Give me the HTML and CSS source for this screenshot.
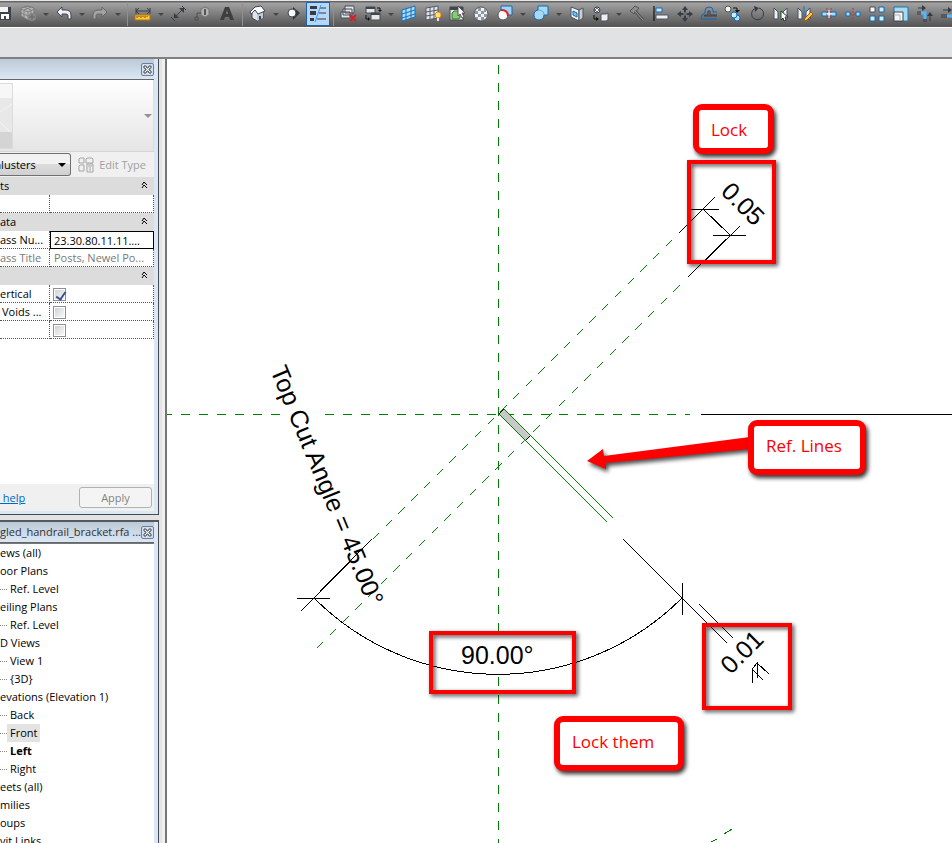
FILE: index.html
```html
<!DOCTYPE html>
<html lang="en">
  <head>
    <meta charset="UTF-8" />
    <meta name="viewport" content="width=device-width, initial-scale=1" />
    <title>angled_handrail_bracket.rfa</title>
    <link rel="stylesheet" href="styles.css">
  </head>
  <body>
    <div class="toolbar" role="toolbar" aria-label="Quick access">
      <button class="tool" aria-label="Save"><svg viewBox="0 0 16 16"><path d="M0 1h15v13H0z" fill="#3c4250"/><path d="M3 1h9v5H3z" fill="#f4f4f4"/><path d="M5 8h8v5H5z" fill="#fff"/><path d="M8 10h2v3H8z" fill="#3c4250"/><path d="M1 2h1v11H1z" fill="#8f97a5"/></svg></button>
      <button class="tool" aria-label="Synchronize"><svg viewBox="0 0 16 16"><path d="M8 0l6 2v8l-6 4-7-4V2z" fill="#b4b4b4" stroke="#777"/><path d="M1 3l7 3 6-3M8 6v8M4 1l7 3v8M11 1L4 4v8M1 7l7 3 6-3" fill="none" stroke="#808080"/><circle cx="12" cy="11" r="4" fill="#888"/><path d="M9 11h6M12 8v6" stroke="#666"/></svg></button>
      <button class="caret" aria-label="Synchronize options"></button>
      <button class="tool" aria-label="Undo"><svg viewBox="0 0 16 16"><path d="M1 6l5-5v3h4c3 0 5 2 5 5v4h-3v-3c0-2-1-2-3-2H6v3z" fill="#eef0f3" stroke="#3e4450"/></svg></button>
      <button class="caret" aria-label="Undo list"></button>
      <button class="tool" aria-label="Redo"><svg viewBox="0 0 16 16"><path d="M15 6l-5-5v3H6C3 4 1 6 1 9v4h3v-3c0-2 1-2 3-2h3v3z" fill="#a4a4a4" stroke="#666"/></svg></button>
      <button class="caret" aria-label="Redo list"></button>
      <span class="sep"></span>
      <button class="tool" aria-label="Measure"><svg viewBox="0 0 16 16"><path d="M1 5h14M4 2L1 5l3 3M12 2l3 3-3 3M1 2v6M15 2v6" fill="none" stroke="#363c48"/><path d="M0 9h15v5H0z" fill="#ffc740" stroke="#b37500"/><path d="M2 10v2M4 10v1M6 10v2M8 10v1M10 10v2M12 10v1" stroke="#7c5200"/></svg></button>
      <button class="caret" aria-label="Measure options"></button>
      <button class="tool" aria-label="Aligned dimension"><svg viewBox="0 0 16 16"><path d="M4 11L12 3M11 0l4 4M0 11l4 4" fill="none" stroke="#363c48"/><path d="M8 2h5v5zM3 7v5h5z" fill="#363c48"/></svg></button>
      <button class="tool" aria-label="Tag by category"><svg viewBox="0 0 16 16"><path d="M10 1l4 2v6l-4 2-4-2V3z" fill="#b5b5b5" stroke="#737373"/><path d="M9 4h1v5" fill="none" stroke="#555" stroke-width="2"/><path d="M6 7H2v5" fill="none" stroke="#505050"/><path d="M0 11h3v3H0z" fill="none" stroke="#505050"/></svg></button>
      <button class="tool" aria-label="Text"><svg viewBox="0 0 16 16"><path d="M6 1h4l5 13h-4l-1-3H6l-1 3H1zM8 4L7 8h2z" fill="#3e3e3e" fill-rule="evenodd"/></svg></button>
      <span class="sep"></span>
      <button class="tool" aria-label="Default 3D view"><svg viewBox="0 0 16 16"><path d="M2 6v6l5 3 6-3V6L9 2z" fill="#dfe3ea" stroke="#3e4450"/><path d="M7 8v7l6-3V6z" fill="#c1cad8"/><path d="M0 6l5-5 6-1 4 5-7 3-3-4-4 4z" fill="#fff" stroke="#3e4450"/><path d="M9 10h2v3l-2 1z" fill="#3e4450"/></svg></button>
      <button class="caret" aria-label="3D view options"></button>
      <button class="tool" aria-label="Section"><svg viewBox="0 0 16 16"><path d="M7 1l7 6-7 7z" fill="#30353f"/><circle cx="6" cy="7" r="4" fill="#f8f8f8" stroke="#404652"/></svg></button>
      <button class="tool active" aria-label="Thin lines" aria-pressed="true"><svg viewBox="0 0 16 16"><path d="M0 0h7v3H0zM0 5h6v4H0zM0 12h4v3H0z" fill="#363b45"/><path d="M10 2h6M9 7h7M7 13h9" stroke="#363b45"/><path d="M11 -1L5 16" stroke="#3b99f2"/></svg></button>
      <span class="sep"></span>
      <button class="tool" aria-label="Close hidden windows"><svg viewBox="0 0 16 16"><path d="M4 0h9v7H4zM2 3h9v6H2zM0 6h9v6H0z" fill="#e2e5e9" stroke="#444a55"/><path d="M9 9l6 6M15 9l-6 6" stroke="#d81f26" stroke-width="2"/></svg></button>
      <button class="tool" aria-label="Switch windows"><svg viewBox="0 0 16 16"><path d="M1 1h9v6H1zM6 7h9v7H6z" fill="#e5e7ea" stroke="#444a55"/><path d="M1 1h9v2H1zM6 7h9v2H6z" fill="#40454f"/><path d="M12 2h3v3M1 9v4h3" fill="none" stroke="#111"/><path d="M13 4h4l-2 2zM3 11v4l2-2z" fill="#111"/></svg></button>
      <button class="caret" aria-label="Switch windows list"></button>
      <button class="tool" aria-label="Curtain system"><svg viewBox="0 0 16 16"><path d="M1 4l13-4v11L1 15z" fill="#a9dcfa" stroke="#1672bd"/><path d="M5 3v11M10 1v11M1 8l13-4M1 12l13-4" fill="none" stroke="#1672bd"/></svg></button>
      <button class="tool" aria-label="Show grid"><svg viewBox="0 0 16 16"><path d="M1 2l12-2v12L1 14z" fill="#e0e4ea" stroke="#555b67"/><path d="M5 1v12M9 1v12M1 6l12-2M1 10l12-2" fill="none" stroke="#555b67"/><circle cx="13" cy="9" r="3" fill="#ffdf79" stroke="#ef8b0b"/><path d="M12 12h2v3h-2z" fill="#e9e9e9"/></svg></button>
      <button class="tool" aria-label="Select elements"><svg viewBox="0 0 16 16"><path d="M1 1h13v13H1z" fill="#e9eeea" stroke="#41464e"/><path d="M1 1h13v3H1z" fill="#41464e"/><path d="M3 7l2-2h6v7l-2 1H3z" fill="#91c681" stroke="#2c7720"/><path d="M9 0v10l2-2 2 4 2-1-2-4h3z" fill="#fff" stroke="#555"/></svg></button>
      <button class="tool" aria-label="Material"><svg viewBox="0 0 16 16"><circle cx="8" cy="8" r="7" fill="#f1f1f1" stroke="#4c525c"/><path d="M5 2h3v3H5zM11 3h2v3h-2zM2 5h3v3H2zM8 5h3v3H8zM5 8h3v3H5zM11 8h3v3h-3zM3 11h2v2H3zM8 11h3v3H8z" fill="#8f99a6"/></svg></button>
      <button class="tool" aria-label="Cut geometry"><svg viewBox="0 0 16 16"><path d="M4 0h11v9H4z" fill="#9fd6f5" stroke="#1569b0"/><circle cx="6" cy="9" r="5" fill="#fafafa" stroke="#555b66"/><path d="M4 4c4 0 7 2 7 6" fill="none" stroke="#d9242a" stroke-width="2"/></svg></button>
      <button class="caret" aria-label="Cut options"></button>
      <button class="tool" aria-label="Join geometry"><svg viewBox="0 0 16 16"><path d="M5 0h10v9h-4a5 5 0 1 1-6-5z" fill="#a5d9f6" stroke="#1569b0"/><path d="M5 4c4 0 6 2 6 5" fill="none" stroke="#5ba5d6"/></svg></button>
      <button class="caret" aria-label="Join options"></button>
      <button class="tool" aria-label="Split face"><svg viewBox="0 0 16 16"><path d="M2 1l8 3v11l-8-4z" fill="#eef2f5" stroke="#4b515c"/><path d="M10 4l4-2v10l-4 3z" fill="#c9ced6" stroke="#4b515c"/><path d="M4 5l4 2v4L4 9z" fill="#7ec1ef" stroke="#1267b3"/></svg></button>
      <button class="tool" aria-label="Paint"><svg viewBox="0 0 16 16"><circle cx="4" cy="4" r="3" fill="#fff" stroke="#3b414c"/><path d="M3 1h2v2H3zM1 3h2v2H1zM5 3h2v2H5zM3 5h2v2H3z" fill="#5c6470"/><path d="M8 8h5l2-1v7l-2 1H8z" fill="#eceff3" stroke="#4c525d"/><path d="M1 9v4h3" fill="none" stroke="#111"/><path d="M3 11v4l3-2z" fill="#111"/></svg></button>
      <button class="caret" aria-label="Paint options"></button>
      <button class="tool" aria-label="Demolish"><svg viewBox="0 0 16 16"><path d="M1 5l5-5 4 2-5 6z" fill="#8d8d8d" stroke="#555"/><path d="M6 5l8 9" stroke="#555" stroke-width="3"/><path d="M6 5l8 9" stroke="#999"/></svg></button>
      <button class="tool" aria-label="Align"><svg viewBox="0 0 16 16"><path d="M1 0v15" stroke="#000"/><path d="M3 2h6v4H3z" fill="#c4e7fb" stroke="#176fb9"/><path d="M3 9h12v4H3z" fill="#edf0f4" stroke="#535966"/></svg></button>
      <button class="tool" aria-label="Move"><svg viewBox="0 0 16 16"><path d="M8 0l3 4H5zM8 16l3-4H5zM0 8l4-3v6zM16 8l-4-3v6z" fill="#363c47"/><path d="M8 3v3M8 10v3M3 8h3M10 8h3" stroke="#363c47" stroke-width="2"/><path d="M7 7h2v2H7z" fill="#fff" stroke="#444"/></svg></button>
      <button class="tool" aria-label="Offset"><svg viewBox="0 0 16 16"><path d="M16 6h-4V4q0-3-4-3T4 5v2Q0 8 0 13h16" fill="none" stroke="#1466b4"/><path d="M16 9H9V5H7v4H5q-2 0-2 1h13" fill="none" stroke="#343b47"/></svg></button>
      <button class="tool" aria-label="Copy"><svg viewBox="0 0 16 16"><circle cx="3" cy="3" r="3" fill="#f6f6f6" stroke="#555"/><path d="M8 2h4v3" fill="none" stroke="#111"/><path d="M10 4h5l-3 3z" fill="#111"/><circle cx="12" cy="12" r="3" fill="#aee0fa" stroke="#1569b3"/><circle cx="9" cy="9" r="3" fill="#c6ebfd" stroke="#1569b3"/></svg></button>
      <button class="tool" aria-label="Rotate"><svg viewBox="0 0 16 16"><path d="M5 3a6 6 0 1 0 5-1" fill="none" stroke="#353b46"/><path d="M5 0l5 2-4 4z" fill="#353b46"/></svg></button>
      <button class="tool" aria-label="Mirror pick axis"><svg viewBox="0 0 16 16"><path d="M1 2l4 4v7H1zM14 2l-4 4v7h4z" fill="#eef1f5" stroke="#4a505c"/><path d="M7 1v13" stroke="#55bb55"/><path d="M8 5v9l2-2 1 3 2-1-1-3h3z" fill="#fff" stroke="#333"/></svg></button>
      <button class="tool" aria-label="Mirror draw axis"><svg viewBox="0 0 16 16"><path d="M1 2l4 4v7H1zM13 2l-4 4v7h4z" fill="#eef1f5" stroke="#4a505c"/><path d="M7 0v15" stroke="#1c74c4"/><path d="M14 6l2 2-6 6-3 1 1-3z" fill="#ffc744" stroke="#a15c12"/></svg></button>
      <button class="tool" aria-label="Split element"><svg viewBox="0 0 16 16"><path d="M1 6h14v4H1z" fill="#a9def9" stroke="#1368b1"/><path d="M6 2v12M10 2v12" stroke="#b33838" stroke-dasharray="2 1"/><path d="M8 4v8M6 8h5" stroke="#fff"/></svg></button>
      <button class="tool" aria-label="Split with gap"><svg viewBox="0 0 16 16"><path d="M1 6h4v4H1zM11 6h4v4h-4z" fill="#a9def9" stroke="#1368b1"/><path d="M8 2v12" stroke="#b33838" stroke-dasharray="2 1"/><path d="M6 7v2M10 7v2" stroke="#b33838"/></svg></button>
      <button class="tool" aria-label="Array"><svg viewBox="0 0 16 16"><path d="M1 1h5v5H1z" fill="#fff" stroke="#444b57"/><path d="M10 1h5v5h-5zM1 10h5v5H1zM10 10h5v5h-5z" fill="#cfeeff" stroke="#1368b1"/></svg></button>
      <button class="tool" aria-label="Scale"><svg viewBox="0 0 16 16"><path d="M1 1h14v14H1z" fill="#a4dbee" stroke="#2475a8"/><path d="M1 6h9v9H1z" fill="#f4f6f8" stroke="#40454f"/><path d="M1 9h6v6" fill="none" stroke="#adb2ba"/></svg></button>
      <button class="tool" aria-label="Trim to corner"><svg viewBox="0 0 16 16"><path d="M1 2h6M13 15V9" stroke="#343a45"/><path d="M5 -1l4 3-4 3zM10 10l3-4 3 4z" fill="#343a45"/><path d="M0 6h4M0 8h4M7 12v4M9 12v4" stroke="#343a45"/><path d="M4 7h4v6" fill="none" stroke="#52b8ff" stroke-width="3"/></svg></button>
      <button class="tool" aria-label="Trim single"><svg viewBox="0 0 16 16"><path d="M2 4h6" stroke="#343a45"/><path d="M7 1l4 3-4 3z" fill="#343a45"/><path d="M0 9h6M0 11h6" stroke="#343a45"/><path d="M6 10h10" stroke="#52b8ff" stroke-width="3"/></svg></button>
    </div>
    <div class="options-bar"></div>

    <div class="workspace">
      <aside class="sidebar">
        <section class="panel properties">
          <header class="panel-title">
            <span class="title-text"></span>
            <button class="close" aria-label="Close properties"><svg viewBox="0 0 9 9"><path d="M1 1h2l1 2h1l1-2h2v2L6 4v1l2 1v2H6L5 6H4L3 8H1V6l2-1V4L1 3z" fill="#fff" stroke="#3f4757"/></svg></button>
          </header>
          <div class="type-preview">
            <div class="thumb"><svg viewBox="0 0 12 64"><path d="M0 14h12v50H0z" fill="#e8e8e8"/><path d="M0 28l12-8M0 38l12 12" stroke="#f4f4f4"/><path d="M0 48h12v16H0z" fill="#d4d4d4"/></svg></div>
            <span class="preview-caret"></span>
          </div>
          <div class="type-row">
            <div class="select-wrap">
              <select class="type-select" aria-label="Category"><option>alusters</option></select>
            </div>
            <button class="edit-type" disabled>
              <svg viewBox="0 0 16 16"><path d="M1 2l1-1h4v5H1zM8 2l1-1h5l1 1v4H8zM1 9l1-1h4v6H1z" fill="none" stroke="#a5a5a5"/><path d="M9 7h6v8H9z" fill="#f0f0f0" stroke="#a5a5a5"/><path d="M10 9h4M11 11h2M11 13h2" stroke="#a5a5a5"/></svg>
              Edit Type
            </button>
          </div>
          <table class="props">
            <colgroup>
              <col class="name-col" />
              <col />
            </colgroup>
            <tr class="group"><th colspan="2"><span>ts</span><svg viewBox="0 0 7 8"><path d="M1 4l2-3 3 3M1 7l2-3 3 3" fill="none" stroke="#000"/></svg></th></tr>
            <tr><td></td><td></td></tr>
            <tr class="group"><th colspan="2"><span>ata</span><svg viewBox="0 0 7 8"><path d="M1 4l2-3 3 3M1 7l2-3 3 3" fill="none" stroke="#000"/></svg></th></tr>
            <tr><td><label for="omniNumber">ass Nu...</label></td><td class="editing"><input type="text" id="omniNumber" value="23.30.80.11.11...." /></td></tr>
            <tr class="readonly"><td>ass Title</td><td class="value">Posts, Newel Po...</td></tr>
            <tr class="group"><th colspan="2"><svg viewBox="0 0 7 8"><path d="M1 4l2-3 3 3M1 7l2-3 3 3" fill="none" stroke="#000"/></svg></th></tr>
            <tr><td><label for="vertical">ertical</label></td><td><input type="checkbox" id="vertical" checked /></td></tr>
            <tr><td class="inset"><label for="voids">Voids ...</label></td><td><input type="checkbox" id="voids" /></td></tr>
            <tr><td></td><td><input type="checkbox" aria-label="Shared" /></td></tr>
          </table>
          <footer class="panel-footer">
            <a href="#help">&nbsp;help</a>
            <button class="apply" disabled>Apply</button>
          </footer>
        </section>

        <section class="panel browser">
          <header class="panel-title">
            <span class="title-text">gled_handrail_bracket.rfa ...</span>
            <button class="close" aria-label="Close browser"><svg viewBox="0 0 9 9"><path d="M1 1h2l1 2h1l1-2h2v2L6 4v1l2 1v2H6L5 6H4L3 8H1V6l2-1V4L1 3z" fill="#fff" stroke="#3f4757"/></svg></button>
          </header>
          <ul class="tree">
            <li>ews (all)</li>
            <li>oor Plans</li>
            <li class="leaf"><span>Ref. Level</span></li>
            <li>eiling Plans</li>
            <li class="leaf"><span>Ref. Level</span></li>
            <li>D Views</li>
            <li class="leaf"><span>View 1</span></li>
            <li class="leaf"><span>{3D}</span></li>
            <li>evations (Elevation 1)</li>
            <li class="leaf"><span>Back</span></li>
            <li class="leaf selected"><span>Front</span></li>
            <li class="leaf open"><span>Left</span></li>
            <li class="leaf"><span>Right</span></li>
            <li>eets (all)</li>
            <li>milies</li>
            <li>oups</li>
            <li>vit Links</li>
          </ul>
        </section>
      </aside>

      <main class="canvas">
        <svg class="drawing">
          <g transform="translate(-167 -59)">
            <!-- reference planes -->
            <g class="plane">
              <path d="M498.500 65V634M498.500 677V2000"/>
              <path d="M163 414.500H280M325 414.500H690"/>
              <path d="M373 539L674 238"/>
              <path d="M317 648L682 283"/>
              <path d="M711 842l6-3M724 834l8-5" stroke-dasharray="none"/>
            </g>
            <path class="ink" d="M701 414.500H3000"/>

            <!-- bracket profile and reference lines -->
            <path d="M499 414l5-5 26 27-5 5z" fill="#c8c8c8"/>
            <path class="ink" d="M499 414l5-5M525 441l5-5"/>
            <path class="ref-line" d="M504 409L613 518M499 414L607 522"/>

            <!-- top dimension -->
            <path class="ink" d="M679 233L715 197M688 277L740 226M691 209.500H719M713 235.500H746M703 209L730 235"/>

            <!-- angle dimension -->
            <path class="ink" d="M372 539L301 611M297 598.500H330M682.500 583V615M623 539L727 643M699 604L733 638"/>
            <path class="ink" d="M314 598A260 260 0 0 0 682 598"/>
            <path class="ink" d="M752.500 683V669L757 663V678M757 663L769 674M752 669L763 680"/>

            <text class="dim" transform="translate(737 210) rotate(45)" text-anchor="middle">0.05</text>
            <text class="dim" transform="translate(748 658) rotate(-45)" text-anchor="middle">0.01</text>
            <text class="dim" x="461" y="664">90.00°</text>
            <text class="dim" transform="translate(270 370) rotate(67.5)">Top Cut Angle = 45.00°</text>

            <path class="arrow" d="M587 461L603 449L604 456L750 437V449L606 463V469z"/>
          </g>
        </svg>
        <div class="mark mark-offset"></div>
        <div class="mark mark-angle"></div>
        <div class="mark mark-gap"></div>
        <div class="note note-lock">Lock</div>
        <div class="note note-ref">Ref. Lines</div>
        <div class="note note-them">Lock them</div>
      </main>
    </div>
  </body>
</html>
```
FILE: styles.css
```css
* {
  box-sizing: border-box;
}
body {
  display: flex;
  flex-direction: column;
  height: 100vh;
  margin: 0;
  overflow: hidden;
  background-color: #e3e3e3;
  color: #000;
  font-family: "Open Sans", "Noto Sans", sans-serif;
  font-size: 11px;
  line-height: 18px;
}
button,
input,
select {
  margin: 0;
  font: inherit;
  color: inherit;
}

/* Toolbar */
.toolbar {
  display: flex;
  flex: none;
  height: 27px;
  padding-top: 1px;
  margin-left: -8px;
  border-top: 1px solid #e6e6e6;
  border-bottom: 1px solid #5a5a5a;
  background: linear-gradient(#666 0, #666 1px, #a2a2a2 2px, #555 100%);
}
.tool,
.caret {
  flex: none;
  display: flex;
  align-items: center;
  justify-content: center;
  padding: 0;
  border: 0;
  background: none;
}
.tool {
  width: 24px;
}
.tool svg {
  flex: none;
  width: 16px;
  height: 16px;
  overflow: visible;
}
.tool.active {
  border: 1px solid #1b62b5;
  background-color: #b5d6f6;
}
.caret {
  width: 12px;
  padding-right: 1px;
}
.caret::before {
  content: "";
  border: 3px solid transparent;
  border-top: 3px solid #444;
  border-bottom: 0;
}
.sep {
  flex: none;
  width: 7px;
  border-left: 3px solid transparent;
  border-right: 3px solid transparent;
  background: #909090 content-box;
}
.options-bar {
  flex: none;
  height: 32px;
  border-top: 1px solid #fff;
  border-bottom: 2px solid #808080;
  background-color: #e1e2e4;
}

/* Side panels */
.workspace {
  display: flex;
  flex: 1;
  min-height: 0;
}
.sidebar {
  display: flex;
  flex: none;
  flex-direction: column;
  gap: 5px;
  width: 159px;
}
.panel {
  display: flex;
  flex-direction: column;
  padding-right: 4px;
  border-right: 1px solid #474b52;
  background-color: #dbe7f5;
}
.properties {
  flex: none;
  height: 456px;
  padding-bottom: 3px;
  border-bottom: 1px solid #474b52;
  background: linear-gradient(#fff, #fff) no-repeat 0 0 / 154px 425px #dbe7f5;
}
.browser {
  flex: 1;
  min-height: 0;
  border-top: 2px solid #55585e;
}
.panel-title {
  display: flex;
  flex: none;
  align-items: center;
  height: 21px;
  border-bottom: 1px solid #666;
  background: linear-gradient(#bccad8, #dbe7f4);
  color: #333;
  white-space: nowrap;
}
.title-text {
  flex: 1;
}
.close {
  display: flex;
  flex: none;
  align-items: center;
  justify-content: center;
  width: 13px;
  height: 13px;
  padding: 0;
  border: 1px solid #6d7f9a;
  border-radius: 2px;
  background-color: #d3dfec;
}
.close svg {
  flex: none;
  width: 9px;
  height: 9px;
}
.type-preview {
  display: flex;
  flex: none;
  align-items: center;
  justify-content: space-between;
  height: 72px;
  padding-right: 1px;
  border-right: 1px solid #dcdcdc;
  border-bottom: 1px solid #d5d5d5;
  background: linear-gradient(#fff, #e5e5e5);
}
.thumb {
  width: 13px;
  height: 66px;
  border: 1px solid #dcdcdc;
  border-left: 0;
  background-color: #f7f7f7;
}
.thumb svg {
  display: block;
  width: 12px;
  height: 64px;
}
.preview-caret {
  border: 4px solid transparent;
  border-top-color: #929292;
  border-bottom: 0;
}
.type-row {
  display: flex;
  flex: none;
  align-items: center;
  justify-content: space-between;
  height: 25px;
  padding-right: 8px;
  background-color: #f0f0f0;
}
.select-wrap {
  position: relative;
  width: 71px;
}
.select-wrap::after {
  content: "";
  position: absolute;
  top: 10px;
  right: 5px;
  border: 4px solid transparent;
  border-top-color: #000;
  border-bottom: 0;
  pointer-events: none;
}
.type-select {
  display: block;
  width: 100%;
  height: 23px;
  padding: 0;
  appearance: none;
  border: 1px solid #707070;
  border-left: 0;
  border-radius: 0 3px 3px 0;
  background: linear-gradient(#f2f2f2 50%, #dcdcdc 50%, #d0d0d0);
  text-indent: -5px;
}
.edit-type {
  display: flex;
  align-items: center;
  gap: 5px;
  padding: 0;
  border: 0;
  background: none;
  color: #a0a0a0;
  white-space: nowrap;
}
.edit-type svg {
  width: 16px;
  height: 16px;
}
.props {
  width: 154px;
  table-layout: fixed;
  border-collapse: separate;
  border-spacing: 0;
  background-color: #fff;
}
.name-col {
  width: 50px;
}
.props th,
.props td {
  height: 18px;
  padding: 0;
  font-weight: normal;
  line-height: 17px;
  text-align: left;
  vertical-align: top;
  white-space: nowrap;
}
.props td {
  border-right: 1px dotted #555;
  border-bottom: 1px dotted #555;
}
.props .inset {
  padding-left: 2px;
}
.props .value {
  padding-left: 4px;
}
.props .readonly {
  color: #787878;
}
.group th {
  background-color: #dcdcdc;
}
.group svg {
  float: right;
  width: 7px;
  height: 8px;
  margin: 4px 6px 0 0;
}
.props .editing {
  border: 0;
}
.editing input {
  display: block;
  width: 100%;
  height: 18px;
  padding: 0 3px;
  border: 1px solid #000;
  outline: 0;
  background-color: #fff;
}
.props input[type="checkbox"] {
  display: block;
  width: 13px;
  height: 13px;
  padding: 1px;
  margin: 3px 0 0 3px;
  margin-bottom: 1px;
  appearance: none;
  border: 1px solid #8e8f8f;
  background: linear-gradient(135deg, #cfd2d6, #f8f8f8) content-box;
}
.props input[type="checkbox"]:checked::before {
  content: "";
  display: block;
  width: 4px;
  height: 8px;
  margin-left: 3px;
  border: solid #39538f;
  border-width: 0 2px 2px 0;
  transform: rotate(35deg);
}
.panel-footer {
  display: flex;
  align-items: center;
  justify-content: space-between;
  height: 27px;
  padding-right: 2px;
  margin-top: auto;
  background-color: #f0f0f0;
}
.panel-footer a {
  color: #0066cc;
}
.apply {
  width: 73px;
  height: 21px;
  padding: 0;
  border: 1px solid #adb2b5;
  border-radius: 3px;
  background-color: #f4f4f4;
  color: #838383;
}

/* Project browser */
.tree {
  flex: 1;
  min-height: 0;
  padding: 0;
  margin: 0;
  overflow: hidden;
  border-top: 1px solid #777;
  background-color: #fff;
  list-style: none;
  white-space: nowrap;
}
.tree .leaf {
  display: flex;
  align-items: center;
}
.leaf::before {
  content: "";
  width: 7px;
  border-top: 1px dotted #888;
}
.leaf span {
  padding: 0 3px;
}
.selected span {
  background-color: #e3e3e3;
}
.open {
  font-weight: bold;
}

/* Drawing area */
.canvas {
  position: relative;
  flex: 1;
  margin-left: 3px;
  overflow: hidden;
  border: solid #f0f0f0;
  border-width: 0 0 0 3px;
  background-color: #fff;
}
.drawing {
  display: block;
  width: 100%;
  height: 100%;
  border-left: 2px solid #757575;
}
.plane,
.ink,
.ref-line {
  shape-rendering: crispEdges;
}
.plane {
  fill: none;
  stroke: #008000;
  stroke-dasharray: 9 9;
}
.ink {
  fill: none;
  stroke: #000;
}
.ref-line {
  stroke: #008000;
}
.dim {
  font-family: "Liberation Sans", Arial, sans-serif;
  font-size: 25px;
}
.arrow {
  fill: #f00;
  filter: drop-shadow(2px 3px 2px rgba(0, 0, 0, 0.7));
}
.mark,
.note {
  position: absolute;
  border: 4px solid #f00;
}
.mark {
  filter: drop-shadow(2px 2px 2px rgba(0, 0, 0, 0.7));
}
.note {
  padding: 8px 12px;
  border-width: 6px;
  border-radius: 9px;
  background-color: #fff;
  box-shadow: 2px 3px 4px rgba(0, 0, 0, 0.8);
  color: #f00;
  font-size: 17px;
  line-height: 24px;
  white-space: nowrap;
}
.mark-offset {
  left: 522px;
  top: 101px;
  width: 89px;
  height: 104px;
}
.mark-angle {
  left: 264px;
  top: 572px;
  width: 147px;
  height: 63px;
}
.mark-gap {
  left: 537px;
  top: 564px;
  width: 90px;
  height: 87px;
}
.note-lock {
  left: 528px;
  top: 45px;
  width: 81px;
  height: 50px;
}
.note-ref {
  left: 583px;
  top: 361px;
  width: 118px;
  height: 55px;
}
.note-them {
  left: 389px;
  top: 657px;
  width: 130px;
  height: 55px;
}
```
